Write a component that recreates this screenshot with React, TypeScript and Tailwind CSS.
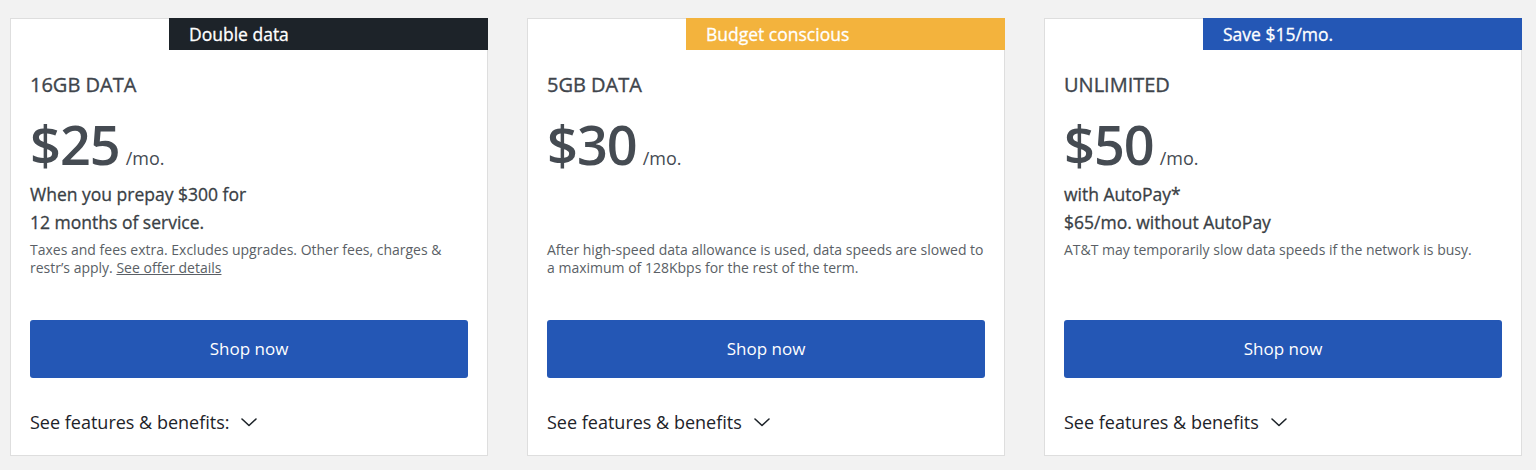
import React from "react";

type Plan = {
  badge: string;
  badgeClass: string;
  title: string;
  price: string;
  lines: string[];
  fine: React.ReactNode;
  features: string;
};

const plans: Plan[] = [
  {
    badge: "Double data",
    badgeClass: "bg-[#1d2329]",
    title: "16GB DATA",
    price: "$25",
    lines: ["When you prepay $300 for", "12 months of service."],
    fine: (
      <>
        Taxes and fees extra. Excludes upgrades. Other fees, charges &amp; restr’s apply.{" "}
        <span className="underline">See offer details</span>
      </>
    ),
    features: "See features & benefits:",
  },
  {
    badge: "Budget conscious",
    badgeClass: "bg-[#f3b33d]",
    title: "5GB DATA",
    price: "$30",
    lines: ["", ""],
    fine: (
      <>
        After high-speed data allowance is used, data speeds are slowed to a maximum of 128Kbps for the rest of the term.
      </>
    ),
    features: "See features & benefits",
  },
  {
    badge: "Save $15/mo.",
    badgeClass: "bg-[#2457b5]",
    title: "UNLIMITED",
    price: "$50",
    lines: ["with AutoPay*", "$65/mo. without AutoPay"],
    fine: <>AT&amp;T may temporarily slow data speeds if the network is busy.</>,
    features: "See features & benefits",
  },
];

function Chevron() {
  return (
    <svg width="20" height="20" viewBox="0 0 20 20" fill="none" stroke="#1d2329" strokeWidth="1.6" strokeLinecap="round" strokeLinejoin="round">
      <path d="M3 7l7 6.5L17 7" />
    </svg>
  );
}

function Card({ p }: { p: Plan }) {
  return (
    <div className="w-[478px] h-[438px] bg-white border border-[#dedede] flex flex-col">
      <div className="flex justify-end -mt-px -mr-px">
        <div className={`w-[319px] h-[32px] ${p.badgeClass} text-white text-[17.5px] leading-[32px] pl-[20px] [-webkit-text-stroke:0.3px_white]`}>
          {p.badge}
        </div>
      </div>
      <div className="px-[19px] flex flex-col">
        <div className="mt-[21px] text-[20px] leading-[28px] text-[#40454c] [-webkit-text-stroke:0.35px_#40454c]">{p.title}</div>
        <div className="mt-[15px] flex items-baseline h-[60px]">
          <span className="text-[54px] font-semibold leading-[60px] text-[#454b52] tracking-[-1px]">{p.price}</span>
          <span className="ml-[6px] text-[18px] text-[#454b52]">/mo.</span>
        </div>
        <div className="mt-[6px] flex flex-col">
          {p.lines.map((l, i) => (
            <div key={i} className="h-[28px] text-[17.5px] leading-[28px] text-[#3a3f45] [-webkit-text-stroke:0.3px_#3a3f45]">
              {l}
            </div>
          ))}
        </div>
        <div className="mt-[5px] h-[79px] text-[14px] leading-[18px] text-[#5a5f66]">{p.fine}</div>
        <button className="h-[58px] w-full rounded-[3px] bg-[#2457b5] text-white text-[17px]">Shop now</button>
        <div className="mt-[30px] h-[28px] flex items-center gap-[10px] text-[18px] leading-[28px] text-[#1d2329]">
          <span>{p.features}</span>
          <Chevron />
        </div>
      </div>
    </div>
  );
}

export default function App() {
  return (
    <div
      className="w-[1536px] h-[470px] bg-[#f2f2f2] pt-[18px] pl-[10px] flex gap-[39px]"
      style={{ fontFamily: '"Open Sans", "Noto Sans", sans-serif' }}
    >
      {plans.map((p) => (
        <Card key={p.title} p={p} />
      ))}
    </div>
  );
}
